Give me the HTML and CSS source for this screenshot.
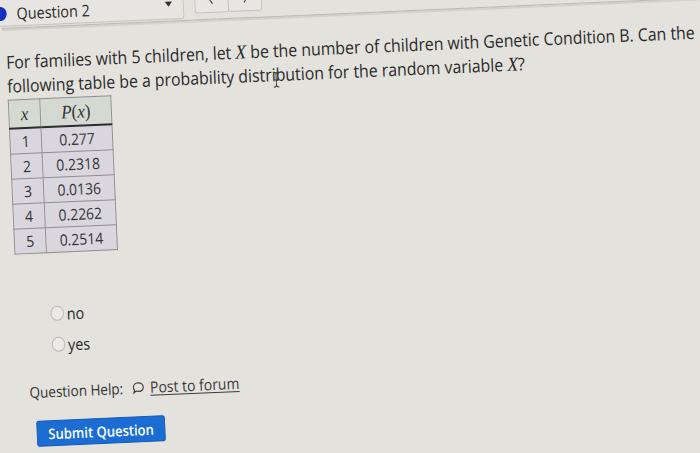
FILE: index.html
```html
<!DOCTYPE html>
<html lang="en">
<head>
    <meta charset="UTF-8">
    <meta name="viewport" content="width=device-width, initial-scale=1.0">
    <title>Question 2</title>
    <link rel="stylesheet" href="styles.css">
</head>
<body>
    <div class="page">
        <div class="topbar">
            <div class="qselect">
                <span class="dot"></span>
                <span class="qname">Question 2</span>
                <span class="caret"></span>
            </div>
            <div class="qnav">
                <button class="navbtn">
                    <svg width="10" height="10" viewBox="0 0 10 10"><polyline points="6,1 3,5 6,9" fill="none" stroke="#555" stroke-width="1.3"/></svg>
                </button>
                <button class="navbtn">
                    <svg width="10" height="10" viewBox="0 0 10 10"><polyline points="4,1 7,5 4,9" fill="none" stroke="#555" stroke-width="1.3"/></svg>
                </button>
            </div>
        </div>

        <div class="question">
            <p class="qtext">For families with 5 children, let <i class="m">X</i> be the number of children with Genetic Condition B. Can the following table be a probability distribution for the random variable <i class="m">X</i>?</p>
            <span class="ibeam">
                <svg width="8" height="17" viewBox="0 0 8 17"><path d="M1 1 Q4 1 4 3 Q4 1 7 1 M4 3 L4 14 M1 16 Q4 16 4 14 Q4 16 7 16 M2 9 L6 9" fill="none" stroke="#333" stroke-width="1"/></svg>
            </span>

            <table class="dist">
                <tr><th><i>x</i></th><th><i>P</i>(<i>x</i>)</th></tr>
                <tr><td>1</td><td>0.277</td></tr>
                <tr><td>2</td><td>0.2318</td></tr>
                <tr><td>3</td><td>0.0136</td></tr>
                <tr><td>4</td><td>0.2262</td></tr>
                <tr><td>5</td><td>0.2514</td></tr>
            </table>

            <ul class="choices">
                <li><span class="radio"></span>no</li>
                <li><span class="radio"></span>yes</li>
            </ul>

            <div class="help">
                Question Help:
                <a class="forum" href="#">
                    <svg width="14" height="13" viewBox="0 0 14 13"><path d="M7 1.5 C10.3 1.5 12.5 3.4 12.5 5.8 C12.5 8.2 10.3 10 7 10 C6 10 5.2 9.9 4.5 9.6 L1.8 11.5 L2.6 8.6 C1.9 7.8 1.5 6.9 1.5 5.8 C1.5 3.4 3.7 1.5 7 1.5 Z" fill="none" stroke="#3a3a3a" stroke-width="1.2"/></svg>
                    <span>Post to forum</span>
                </a>
            </div>

            <button class="submit">Submit Question</button>
        </div>
    </div>
</body>
</html>
```

FILE: styles.css
```css
body, html {
    margin: 0;
    padding: 0;
    height: 100%;
    overflow: hidden;
    background-color: #e3e2dd;
    font-family: 'Open Sans', 'Noto Sans', Arial, sans-serif;
    color: #2a2a2a;
}

.page {
    width: 775px;
    transform-origin: 0 0;
    transform: rotate(-2.5deg) scaleX(0.9);
}

.topbar {
    display: flex;
    align-items: flex-start;
    gap: 12px;
    height: 44px;
    margin-top: -16px;
    border-bottom: 1px solid #b9b8b3;
    box-shadow: 0 2px 0 #d2d1cc;
}

.qselect {
    display: flex;
    align-items: center;
    width: 221px;
    height: 25px;
    padding-top: 16px;
    margin-left: -20px;
    border: 1px solid #c4c3bf;
    border-radius: 3px;
    background-color: #e6e5e1;
}

.dot {
    width: 14px;
    height: 14px;
    margin-left: 11px;
    border-radius: 50%;
    background-color: #1530c0;
}

.qname {
    margin-left: 11px;
    font-size: 16px;
    line-height: 20px;
}

.caret {
    margin-left: auto;
    margin-right: 12px;
    margin-bottom: 4px;
    width: 0;
    height: 0;
    border-left: 4px solid transparent;
    border-right: 4px solid transparent;
    border-top: 5px solid #333;
}

.qnav {
    display: flex;
    height: 38px;
}

.navbtn {
    width: 38px;
    height: 38px;
    padding: 19px 0 0;
    border: 1px solid #c4c3bf;
    border-radius: 3px;
    background-color: #e8e7e3;
    display: flex;
    justify-content: center;
    align-items: flex-start;
}

.navbtn + .navbtn {
    margin-left: -1px;
}

.question {
    position: relative;
    padding-left: 3px;
}

.qtext {
    margin: 21px 0 0;
    font-size: 17.6px;
    line-height: 24px;
}

.m {
    font-family: 'Liberation Serif', 'DejaVu Serif', serif;
    font-style: italic;
    font-size: 1.12em;
    font-weight: normal;
}

.ibeam {
    position: absolute;
    left: 298px;
    top: 33px;
    line-height: 0;
}

.dist {
    margin-top: 2px;
    border-collapse: collapse;
    border: 1px solid #8e8e8e;
    font-size: 15.5px;
    color: #333;
}

.dist th {
    height: 27px;
    padding: 0;
    background-color: #d4dad2;
    border: 1px solid #8e8e8e;
    border-bottom: 2px solid #2c2c2c;
    font-family: 'Liberation Serif', 'DejaVu Serif', serif;
    font-weight: normal;
    font-size: 19px;
}

.dist td {
    height: 24px;
    padding: 0;
    text-align: center;
    background-color: #d9d6de;
    border: 1px solid #8e8e8e;
}

.dist td:first-child {
    width: 34px;
}

.dist td + td {
    width: 78px;
}

.choices {
    list-style: none;
    margin: 45px 0 0;
    padding-left: 37px;
    font-size: 16px;
}

.choices li {
    display: flex;
    align-items: center;
    height: 31px;
}

.radio {
    width: 13px;
    height: 13px;
    margin-right: 3px;
    border: 1px solid #b8b7b3;
    border-radius: 50%;
    background-color: #ebeae6;
}

.help {
    display: flex;
    align-items: center;
    margin: 20px 0 0 10px;
    height: 22px;
    font-size: 15px;
    color: #333;
}

.forum {
    display: flex;
    align-items: center;
    gap: 6px;
    margin-left: 10px;
    color: #3a3a3a;
    text-decoration: none;
}

.forum span {
    font-size: 15.5px;
    text-decoration: underline;
    text-underline-offset: 2px;
}

.submit {
    display: block;
    margin: 18px 0 0 16px;
    width: 143px;
    height: 26px;
    padding: 0;
    border: 1px solid #1559b3;
    border-radius: 3px;
    background-color: #1b6dd3;
    color: #ffffff;
    font-family: 'Open Sans', Arial, sans-serif;
    font-size: 14.5px;
    font-weight: 600;
}
```
